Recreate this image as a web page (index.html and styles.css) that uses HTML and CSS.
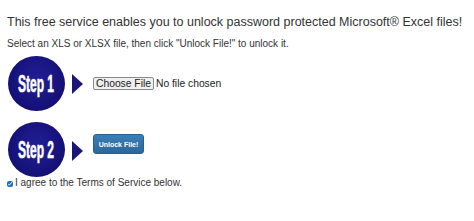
FILE: index.html
```html
<!DOCTYPE html>
<html lang="en">
<head>
    <meta charset="UTF-8">
    <meta name="viewport" content="width=device-width, initial-scale=1.0">
    <title>Unlock Excel File</title>
    <link rel="stylesheet" href="styles.css">
</head>
<body>
    <h1 class="title">This free service enables you to unlock password protected Microsoft&reg; Excel files!</h1>
    <p class="hint">Select an XLS or XLSX file, then click "Unlock File!" to unlock it.</p>

    <div class="step">
      <div class="badge"><span>Step 1</span></div>
      <svg class="arrow" width="11" height="20" viewBox="0 0 11 20"><polygon points="0,0 11,10 0,20" fill="#1b1577"/></svg>
      <label class="file-pick">
        <input type="file" class="file-input" accept=".xls,.xlsx">
        <span class="file-btn">Choose File</span>
        <span class="file-name">No file chosen</span>
      </label>
    </div>

    <div class="step step-two">
      <div class="badge"><span>Step 2</span></div>
      <svg class="arrow" width="11" height="20" viewBox="0 0 11 20"><polygon points="0,0 11,10 0,20" fill="#1b1577"/></svg>
      <button class="unlock">Unlock File!</button>
    </div>

    <label class="agree">
      <input type="checkbox" class="agree-box" checked>
      <span>I agree to the Terms of Service below.</span>
    </label>
</body>
</html>
```

FILE: styles.css
```css
body {
  margin: 0;
  padding: 0 7px;
  background: #fff;
  font-family: "Liberation Sans", Arial, sans-serif;
  color: #333;
}

.title {
  margin: 15px 0 0;
  font-size: 12.5px;
  line-height: 15px;
  font-weight: normal;
  white-space: nowrap;
}

.hint {
  margin: 8px 0 0;
  font-size: 10px;
  line-height: 12px;
}

.step {
  display: flex;
  align-items: center;
  margin-top: 6px;
}

.step-two {
  margin-top: 11px;
}

.badge {
  width: 57px;
  height: 55px;
  margin-left: 1px;
  border-radius: 50%;
  background: radial-gradient(ellipse at 50% 42%, #221f96 0%, #17137e 55%, #0e0a5e 100%);
  display: flex;
  align-items: center;
  justify-content: center;
  flex-shrink: 0;
}

.badge span {
  display: block;
  color: #fff;
  font-weight: bold;
  font-size: 24px;
  line-height: 24px;
  white-space: nowrap;
  -webkit-text-stroke: 0.6px #fff;
  transform: scaleX(0.5);
}

.arrow {
  margin-left: 7px;
  flex-shrink: 0;
}

.step-two .arrow {
  margin-top: 3px;
}

.file-pick {
  display: flex;
  align-items: center;
  margin-left: 10px;
  font-size: 10.3px;
  color: #222;
  cursor: pointer;
}

.file-input {
  display: none;
}

.file-btn {
  height: 13px;
  line-height: 12px;
  padding: 0 2px;
  box-sizing: border-box;
  border: 1px solid #8a8a8a;
  border-radius: 2px;
  background: #efefef;
  margin-right: 2px;
}

.unlock {
  margin-left: 10px;
  margin-top: -11px;
  width: 51px;
  height: 20px;
  padding: 0;
  border: 1px solid #255f90;
  border-radius: 3px;
  background: linear-gradient(#3a7fb8, #2a679c);
  color: #fff;
  font-family: "Liberation Sans", Arial, sans-serif;
  font-size: 7px;
  font-weight: bold;
}

.agree {
  display: flex;
  align-items: center;
  font-size: 10px;
  line-height: 12px;
}

.agree-box {
  width: 6px;
  height: 6px;
  margin: 1px 2px 0 0;
  accent-color: #1a6fc4;
}
```
